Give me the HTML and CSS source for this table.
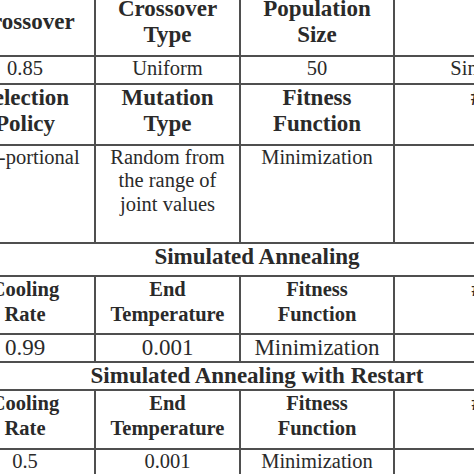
FILE: index.html
```html
<!DOCTYPE html>
<html>
<head>
<meta charset="utf-8">
<link rel="stylesheet" href="styles.css">
</head>
<body>
<div class="frame">
<table class="params">
  <colgroup>
    <col class="c1"><col class="c2"><col class="c3"><col class="c4">
  </colgroup>
  <tbody class="ga">
    <tr class="head">
      <th>Crossover</th>
      <th>Crossover<br>Type</th>
      <th>Population<br>Size</th>
      <th></th>
    </tr>
    <tr class="data">
      <td>0.85</td>
      <td>Uniform</td>
      <td>50</td>
      <td>Single</td>
    </tr>
    <tr class="head">
      <th>Selection<br>Policy</th>
      <th>Mutation<br>Type</th>
      <th>Fitness<br>Function</th>
      <th>#<br>&nbsp;</th>
    </tr>
    <tr class="data tall">
      <td class="nowrap">Pro-portional</td>
      <td>Random from<br>the range of<br>joint values</td>
      <td>Minimization</td>
      <td></td>
    </tr>
  </tbody>
  <tbody class="sa">
    <tr class="title">
      <th colspan="4">Simulated Annealing</th>
    </tr>
    <tr class="head">
      <th>Cooling<br>Rate</th>
      <th>End<br>Temperature</th>
      <th>Fitness<br>Function</th>
      <th>#<br>&nbsp;</th>
    </tr>
    <tr class="data">
      <td>0.99</td>
      <td>0.001</td>
      <td>Minimization</td>
      <td></td>
    </tr>
  </tbody>
  <tbody class="sar">
    <tr class="title">
      <th colspan="4">Simulated Annealing with Restart</th>
    </tr>
    <tr class="head">
      <th>Cooling<br>Rate</th>
      <th>End<br>Temperature</th>
      <th>Fitness<br>Function</th>
      <th>#<br>&nbsp;</th>
    </tr>
    <tr class="data">
      <td>0.5</td>
      <td>0.001</td>
      <td>Minimization</td>
      <td></td>
    </tr>
  </tbody>
</table>
</div>
</body>
</html>
```

FILE: styles.css
```css
html, body {
  margin: 0;
  padding: 0;
  background: #ffffff;
}

.frame {
  width: 474px;
  height: 474px;
  overflow: hidden;
}

.params {
  border-collapse: collapse;
  table-layout: fixed;
  width: 604px;
  margin-left: -46px;
  margin-top: -6px;
  font-family: "Liberation Serif", "Times New Roman", serif;
  color: #2a2a2a;
}

.c1 { width: 140px; }
.c2 { width: 145px; }
.c3 { width: 154px; }
.c4 { width: 165px; }

.params th,
.params td {
  border: 2px solid #4f4f4f;
  text-align: center;
  padding: 0 4px;
  overflow: hidden;
  white-space: nowrap;
}

.head th {
  vertical-align: middle;
  font-weight: bold;
  padding-bottom: 7px;
}

.data td {
  vertical-align: top;
  font-weight: normal;
}

.title th {
  font-weight: bold;
  font-size: 23px;
  line-height: 26px;
  border-left: none;
  border-right: none;
}

/* Genetic algorithm block */
.ga .head th {
  font-size: 23px;
  line-height: 26px;
}
.ga .data td {
  font-size: 20.5px;
  line-height: 23.5px;
  padding-bottom: 2px;
}
.ga .tall td {
  padding-bottom: 26px;
}

/* Simulated annealing block */
.sa .title th {
  padding-bottom: 5px;
}
.sa .head th {
  font-size: 20.5px;
  line-height: 24.5px;
  padding-bottom: 7px;
}
.sa .data td {
  font-size: 23px;
  line-height: 26px;
}

/* Simulated annealing with restart block */
.sar .title th {
  padding-bottom: 0;
}
.sar .head th {
  font-size: 20.5px;
  line-height: 24.5px;
  padding-bottom: 8px;
}
.sar .data td {
  font-size: 20.5px;
  line-height: 23.5px;
}
```
